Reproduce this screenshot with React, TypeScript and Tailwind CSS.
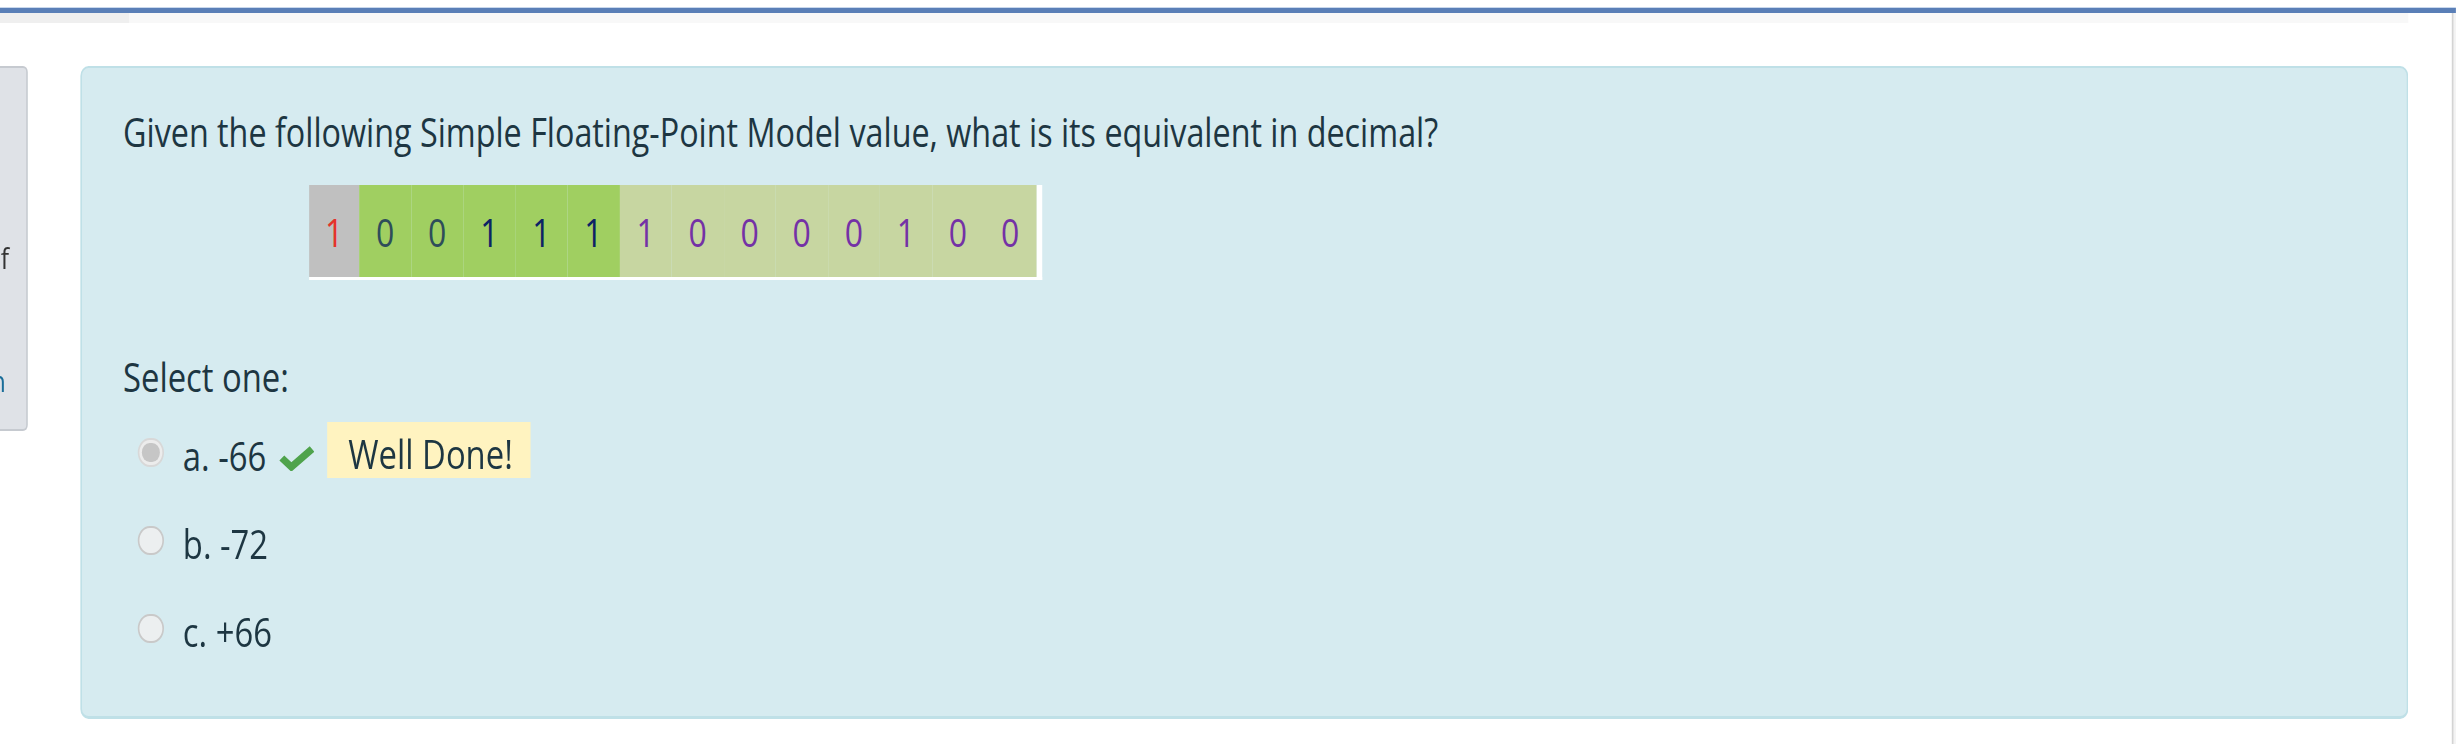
const bits = {
  sign: ["1"],
  exponent: ["0", "0", "1", "1", "1"],
  mantissa: ["1", "0", "0", "0", "0", "1", "0", "0"],
};

const options = [
  { label: "a. -66", checked: true, feedback: "Well Done!" },
  { label: "b. -72", checked: false },
  { label: "c. +66", checked: false },
];

function Radio({ checked }: { checked: boolean }) {
  if (checked) {
    return (
      <span className="mt-[16px] ml-[18px] flex h-[29px] w-[32px] shrink-0 rounded-full border-2 border-[#d8d8d8] bg-[#ececec] p-[3px]">
        <span className="h-full w-full rounded-full bg-[#c6c6c6]" />
      </span>
    );
  }
  return (
    <span className="mt-[16px] ml-[18px] h-[29px] w-[32px] shrink-0 rounded-full border-2 border-[#c9c9c9] bg-[#eceff0]" />
  );
}

function CheckMark() {
  return (
    <svg
      className="mt-[24px] ml-[15px] h-[25px] w-[43px] shrink-0"
      viewBox="0 0 35 25"
      preserveAspectRatio="none"
    >
      <polyline
        points="3,12 12.5,21 33,3"
        fill="none"
        stroke="#4fa34c"
        strokeWidth="7"
      />
    </svg>
  );
}

function BitTable() {
  return (
    <div className="mt-[25px] ml-[227px] flex w-fit border-r-[7px] border-b-[3px] border-white text-[39px] leading-none">
      {bits.sign.map((b, i) => (
        <div key={"s" + i} className="flex h-[92px] w-[61px] items-center justify-center bg-[#c0c0c0] text-[#e5322b]">
          {b}
        </div>
      ))}
      {bits.exponent.map((b, i) => (
        <div
          key={"e" + i}
          className={
            "flex h-[92px] w-[63.5px] items-center justify-center bg-[#a0cf61] " +
            (b === "1" ? "text-[#0c2365]" : "text-[#2e4d5a]")
          }
        >
          {b}
        </div>
      ))}
      {bits.mantissa.map((b, i) => (
        <div key={"m" + i} className="flex h-[92px] w-[63.5px] items-center justify-center bg-[#c7d6a1] text-[#7431a6]">
          {b}
        </div>
      ))}
    </div>
  );
}

export default function App() {
  return (
    <div className="h-[744px] w-[2456px] overflow-hidden bg-white font-['Open_Sans',sans-serif]">
      {/* screenshot is squeezed sideways, so lay out at natural width and squeeze back */}
      <div className="flex h-full w-[2995px] origin-top-left scale-x-[0.82] flex-col">
        <div className="h-[7px] shrink-0 bg-white" />
        <div className="h-px shrink-0 bg-[#c9d8ec]" />
        <div className="h-[5px] shrink-0 bg-[#5a7fb7]" />

        <div className="flex flex-1">
          <div className="flex w-[2990px] shrink-0 flex-col">
            <div className="flex h-[10px] w-[2937px]">
              <div className="w-[158px] bg-[#efefef]" />
              <div className="flex-1 bg-[#f8f8f8]" />
            </div>

            <div className="mt-[43px] flex items-start">
              {/* question info block, cut off at the left */}
              <div className="h-[365px] w-[34px] shrink-0 overflow-hidden rounded-r-[6px] border-2 border-l-0 border-[#c6cad0] bg-[#dfe2e7] text-[30px] leading-none whitespace-nowrap">
                <div className="flex justify-end pt-[175px] pr-[21px] text-[#333333]">
                  <span>1.00 out of</span>
                </div>
                <div className="flex justify-end pt-[93px] pr-[25px] text-[#1a6d99]">
                  <span>Flag question</span>
                </div>
              </div>

              {/* formulation */}
              <div className="ml-[64px] h-[653px] w-[2839px] shrink-0 rounded-[10px] border-2 border-b-[3px] border-[#bfe0e7] bg-[#d6ebf0] pt-[36px] pl-[50px] text-[40px] leading-[56px] text-[#1d3642]">
                <div className="text-[39.4px]">
                  Given the following Simple Floating-Point Model value, what is its equivalent in decimal?
                </div>

                <BitTable />

                <div className="mt-[69px]">Select one:</div>

                <div className="mt-[17px] flex flex-col gap-[32px]">
                  {options.map((o) => (
                    <div key={o.label} className="flex h-[56px] items-start">
                      <Radio checked={o.checked} />
                      <span className="mt-[14px] ml-[23px] leading-none">{o.label}</span>
                      {o.feedback && (
                        <>
                          <CheckMark />
                          <span className="ml-[16px] h-[56px] bg-[#fff3c0] pt-[12px] pr-[22px] pl-[26px] leading-none">
                            {o.feedback}
                          </span>
                        </>
                      )}
                    </div>
                  ))}
                </div>
              </div>
            </div>
          </div>

          <div className="flex-1 border-l-2 border-[#d4d4d4] bg-[#f3f3f3]" />
        </div>
      </div>
    </div>
  );
}
